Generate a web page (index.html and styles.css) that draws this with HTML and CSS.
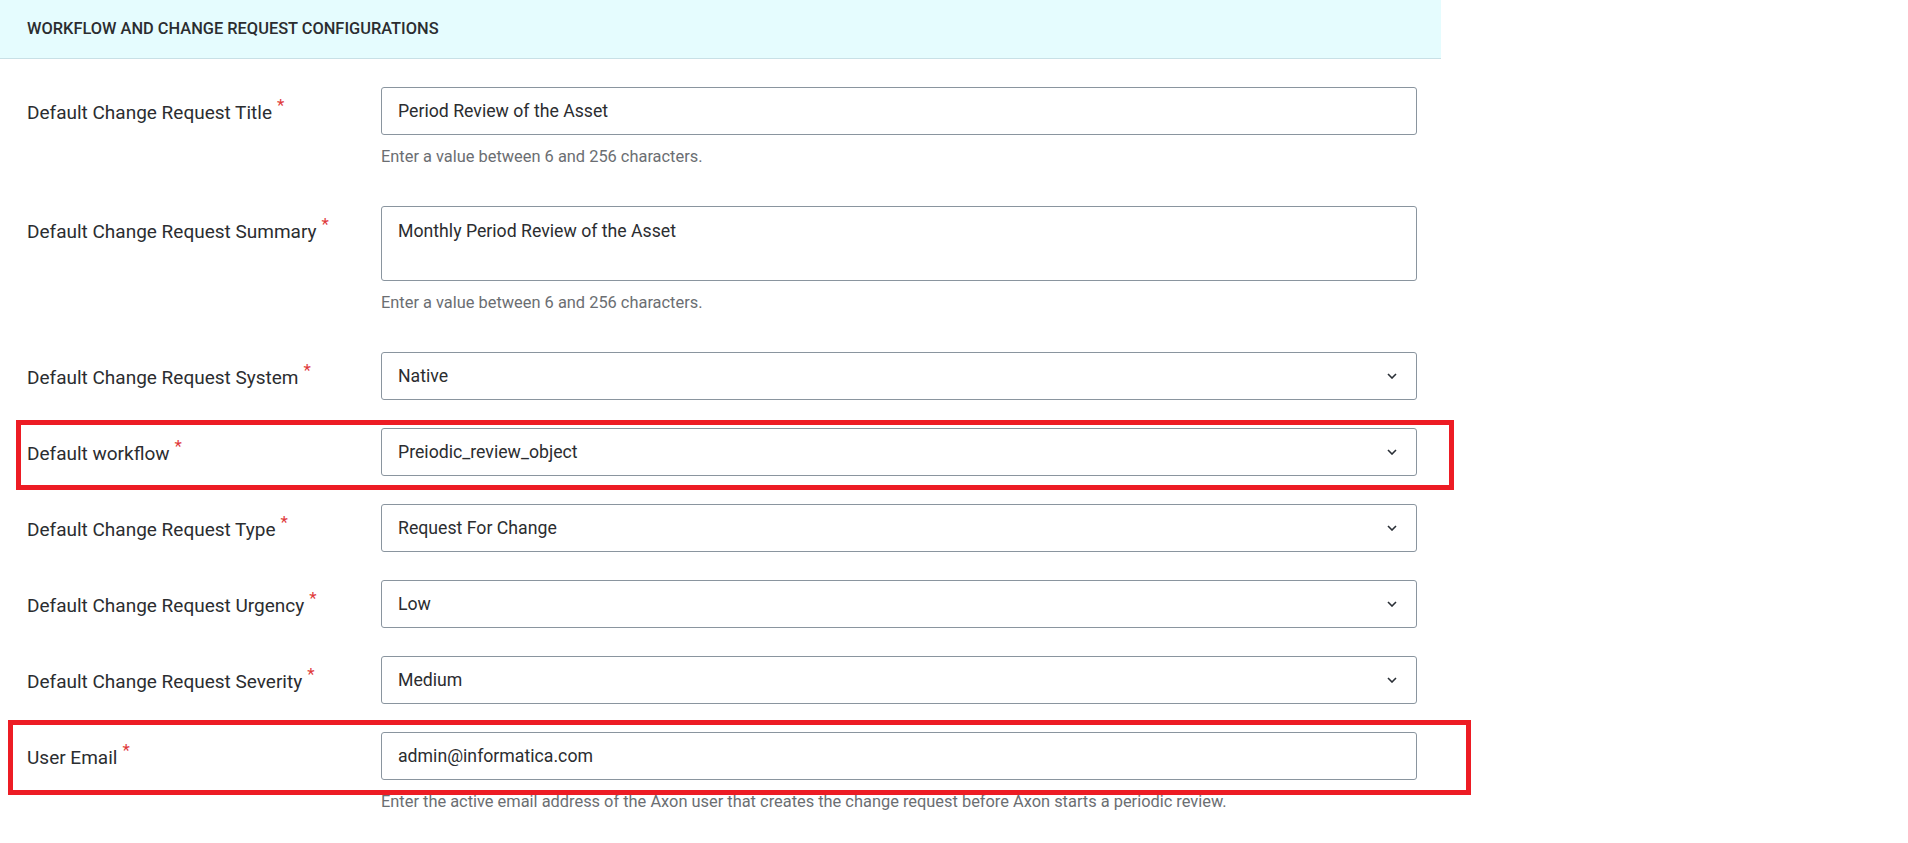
FILE: index.html
```html
<!DOCTYPE html>
<html>
<head>
    <meta charset="utf-8">
    <title>Workflow and Change Request Configurations</title>
    <link rel="stylesheet" href="styles.css">
</head>
<body>
    <div class="panel">
        <div class="panel-head">WORKFLOW AND CHANGE REQUEST CONFIGURATIONS</div>

        <form class="panel-body">
            <div class="field">
                <label class="field-label">Default Change Request Title<span class="req">*</span></label>
                <div class="field-control">
                    <input class="text-input" type="text" value="Period Review of the Asset">
                    <p class="hint">Enter a value between 6 and 256 characters.</p>
                </div>
            </div>

            <div class="field">
                <label class="field-label">Default Change Request Summary<span class="req">*</span></label>
                <div class="field-control">
                    <textarea class="text-area">Monthly Period Review of the Asset</textarea>
                    <p class="hint">Enter a value between 6 and 256 characters.</p>
                </div>
            </div>

            <div class="field">
                <label class="field-label">Default Change Request System<span class="req">*</span></label>
                <div class="field-control">
                    <div class="select-box">
                        <span>Native</span>
                        <svg class="chevron" width="10" height="6" viewBox="0 0 10 6"><path d="M1 1l4 4 4-4" fill="none" stroke="#2a2f36" stroke-width="1.6"/></svg>
                    </div>
                </div>
            </div>

            <div class="field marked marked-workflow">
                <label class="field-label">Default workflow<span class="req">*</span></label>
                <div class="field-control">
                    <div class="select-box">
                        <span>Preiodic_review_object</span>
                        <svg class="chevron" width="10" height="6" viewBox="0 0 10 6"><path d="M1 1l4 4 4-4" fill="none" stroke="#2a2f36" stroke-width="1.6"/></svg>
                    </div>
                </div>
            </div>

            <div class="field">
                <label class="field-label">Default Change Request Type<span class="req">*</span></label>
                <div class="field-control">
                    <div class="select-box">
                        <span>Request For Change</span>
                        <svg class="chevron" width="10" height="6" viewBox="0 0 10 6"><path d="M1 1l4 4 4-4" fill="none" stroke="#2a2f36" stroke-width="1.6"/></svg>
                    </div>
                </div>
            </div>

            <div class="field">
                <label class="field-label">Default Change Request Urgency<span class="req">*</span></label>
                <div class="field-control">
                    <div class="select-box">
                        <span>Low</span>
                        <svg class="chevron" width="10" height="6" viewBox="0 0 10 6"><path d="M1 1l4 4 4-4" fill="none" stroke="#2a2f36" stroke-width="1.6"/></svg>
                    </div>
                </div>
            </div>

            <div class="field">
                <label class="field-label">Default Change Request Severity<span class="req">*</span></label>
                <div class="field-control">
                    <div class="select-box">
                        <span>Medium</span>
                        <svg class="chevron" width="10" height="6" viewBox="0 0 10 6"><path d="M1 1l4 4 4-4" fill="none" stroke="#2a2f36" stroke-width="1.6"/></svg>
                    </div>
                </div>
            </div>

            <div class="field marked marked-email">
                <label class="field-label">User Email<span class="req">*</span></label>
                <div class="field-control">
                    <input class="text-input" type="text" value="admin@informatica.com">
                    <p class="hint">Enter the active email address of the Axon user that creates the change request before Axon starts a periodic review.</p>
                </div>
            </div>
        </form>
    </div>
</body>
</html>
```

FILE: styles.css
```css
body {
    margin: 0;
    background: #ffffff;
    font-family: Roboto, "Liberation Sans", sans-serif;
    color: #2b2d30;
}

.panel {
    width: 1441px;
}

.panel-head {
    height: 58px;
    line-height: 58px;
    padding-left: 27px;
    background: #e5fcfe;
    border-bottom: 1px solid #c8e0e6;
    font-size: 16.4px;
    font-weight: 500;
    color: #2b2d30;
}

.panel-body {
    padding: 28px 24px 0 27px;
}

.field {
    display: grid;
    grid-template-columns: 354px 1fr;
    margin-bottom: 28px;
}

.field-label {
    padding-top: 14px;
    font-size: 19px;
    line-height: 24px;
    color: #2b2d30;
}

.req {
    position: relative;
    top: -8px;
    margin-left: 5px;
    font-size: 17px;
    color: #e03a3a;
}

.text-input,
.text-area,
.select-box {
    box-sizing: border-box;
    width: 100%;
    border: 1px solid #8a959f;
    border-radius: 3px;
    background: #fff;
    font-family: Roboto, "Liberation Sans", sans-serif;
    font-size: 17.7px;
    color: #2b2d30;
}

.text-input {
    display: block;
    height: 48px;
    padding: 0 16px;
}

.text-area {
    display: block;
    height: 75px;
    padding: 12px 16px;
    line-height: 24px;
    resize: none;
}

.select-box {
    display: flex;
    align-items: center;
    justify-content: space-between;
    height: 48px;
    padding: 0 19px 0 16px;
}

.chevron {
    display: block;
}

.hint {
    margin: 12px 0 11px;
    font-size: 16.4px;
    line-height: 20px;
    color: #6b6e72;
}

/* annotation boxes */
.marked {
    position: relative;
}

.marked::after {
    content: "";
    position: absolute;
    border: 5px solid #ed1c24;
    pointer-events: none;
}

.marked-workflow::after {
    top: -8px;
    bottom: -14px;
    left: -11px;
    right: -37px;
}

.marked-email::after {
    top: -12px;
    bottom: 28px;
    left: -19px;
    right: -54px;
}
```
